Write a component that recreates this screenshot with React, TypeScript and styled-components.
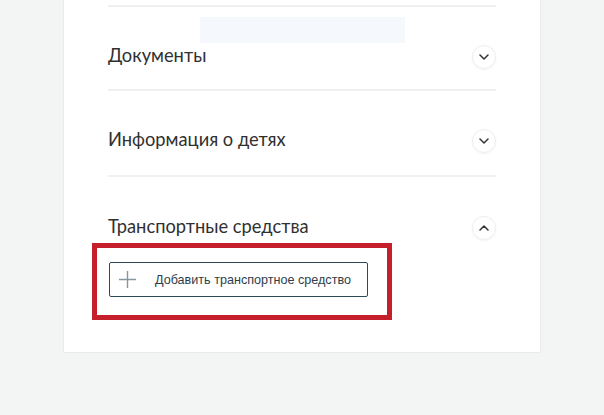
import React from "react";
import styled, { createGlobalStyle } from "styled-components";

const Global = createGlobalStyle`
  html, body { margin: 0; padding: 0; background: #f3f5f5; }
  body { font-family: Lato, "Noto Sans", sans-serif; width: 604px; height: 415px; overflow: hidden; }
`;

const Page = styled.div`
  display: flex;
  padding-left: 63px;
`;

const Card = styled.div`
  width: 478px;
  box-sizing: border-box;
  background: #fff;
  border: 1px solid #e7ebeb;
  border-top: none;
  padding: 5px 44px 32px 44px;
  display: flex;
  flex-direction: column;
`;

const Divider = styled.div`
  height: 2px;
  background: #eef0f1;
`;

const Ghost = styled.div`
  align-self: flex-start;
  margin: 10px 0 0 92px;
  width: 205px;
  height: 26px;
  background: #f5f9fd;
`;

const Row = styled.div<{ $top: number; $bottom: number }>`
  display: flex;
  align-items: flex-start;
  justify-content: space-between;
  padding-top: ${(p) => p.$top}px;
  padding-bottom: ${(p) => p.$bottom}px;
`;

const Title = styled.div`
  font-size: 18.3px;
  line-height: 22px;
  color: #303030;
`;

const Toggle = styled.div`
  width: 22px;
  height: 22px;
  border-radius: 50%;
  border: 1px solid #eceeee;
  box-shadow: 0 1px 2px rgba(0, 0, 0, 0.05);
  display: flex;
  align-items: center;
  justify-content: center;
  margin-top: 1px;
`;

const Highlight = styled.div`
  align-self: flex-start;
  margin-left: -16px;
  width: 300px;
  box-sizing: border-box;
  border: 5px solid #c41f2b;
  padding: 14px 19px 18px 12px;
`;

const AddButton = styled.button`
  width: 100%;
  height: 35px;
  box-sizing: border-box;
  border: 1px solid #2f4a57;
  border-radius: 2px;
  background: #fff;
  display: flex;
  align-items: center;
  padding: 0 0 0 8px;
  gap: 18px;
  font-family: "Liberation Sans", Arial, sans-serif;
  font-size: 12.6px;
  color: #2e3e4a;
  cursor: pointer;
`;

const Chevron = ({ up }: { up?: boolean }) => (
  <svg width="10" height="6" viewBox="0 0 10 6">
    <path
      d={up ? "M1 5 L5 1 L9 5" : "M1 1 L5 5 L9 1"}
      fill="none"
      stroke="#333"
      strokeWidth="1.5"
      strokeLinecap="round"
      strokeLinejoin="round"
    />
  </svg>
);

const Plus = () => (
  <svg width="19" height="19" viewBox="0 0 19 19">
    <path d="M9.5 1 V18 M1 9.5 H18" stroke="#8797a2" strokeWidth="1.4" />
  </svg>
);

export default function App() {
  return (
    <>
      <Global />
      <Page>
        <Card>
          <Divider />
          <Ghost />
          <Row $top={1} $bottom={20}>
            <Title>Документы</Title>
            <Toggle>
              <Chevron />
            </Toggle>
          </Row>
          <Divider />
          <Row $top={37} $bottom={22}>
            <Title>Информация о детях</Title>
            <Toggle>
              <Chevron />
            </Toggle>
          </Row>
          <Divider />
          <Row $top={38} $bottom={3}>
            <Title>Транспортные средства</Title>
            <Toggle>
              <Chevron up />
            </Toggle>
          </Row>
          <Highlight>
            <AddButton>
              <Plus />
              <span>Добавить транспортное средство</span>
            </AddButton>
          </Highlight>
        </Card>
      </Page>
    </>
  );
}
